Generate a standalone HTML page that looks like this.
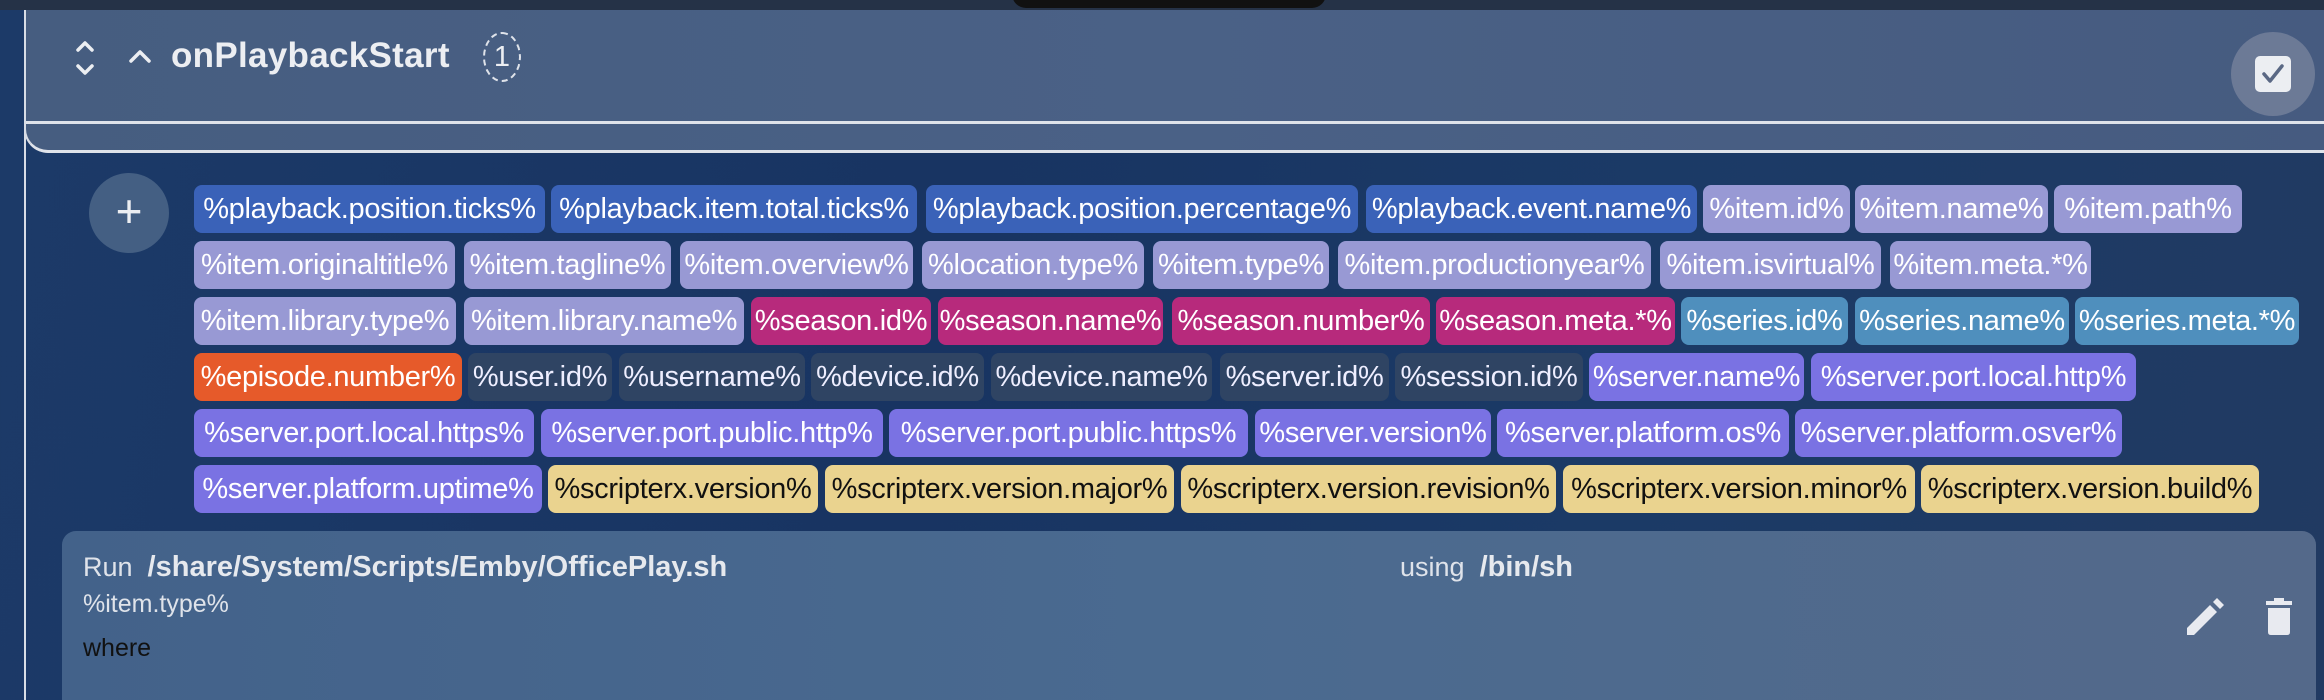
<!DOCTYPE html>
<html><head><meta charset="utf-8"><style>
*{margin:0;padding:0;box-sizing:border-box}
html,body{width:2324px;height:700px;overflow:hidden}
body{background:linear-gradient(100deg,#1c3a68 0%,#183462 40%,#1b3a66 70%,#213a62 100%);font-family:"Liberation Sans",sans-serif;position:relative}
.top{position:absolute;left:0;top:0;width:2324px;height:10px;background:#253247}
.pill{position:absolute;left:1012px;top:-20px;width:314px;height:28px;border-radius:14px;background:#111}
.vline{position:absolute;left:24px;top:10px;width:2px;height:690px;background:#d8dde6}
.head{position:absolute;left:24px;top:10px;width:2310px;height:143px;background:linear-gradient(90deg,#465d80,#4a6186 50%,#465b80);border-left:2px solid #d8dde6;border-bottom:3px solid #dfe3ea;border-bottom-left-radius:24px}
.hline{position:absolute;left:26px;top:121px;width:2300px;height:3px;background:#dfe3ea}
.title{position:absolute;left:171px;top:36px;font-size:35px;font-weight:bold;color:#eceef2;letter-spacing:0.3px}
.badge{position:absolute;left:483px;top:32px;width:38px;height:50px;border:2px dashed #dfe3ea;border-radius:50%;color:#eceef2;font-size:29px;text-align:center;line-height:46px}
.chk{position:absolute;left:2231px;top:32px;width:84px;height:84px;border-radius:50%;background:#6c7a96}
.chk div{position:absolute;left:24px;top:24px;width:36px;height:36px;border-radius:5px;background:#eceef2}
.plus{position:absolute;left:89px;top:173px;width:80px;height:80px;border-radius:50%;background:#445f83;color:#eceef2;font-size:46px;text-align:center;line-height:76px}
.c{position:absolute;height:48px;border-radius:8px;color:#fff;font-size:29px;line-height:48px;text-align:center;white-space:nowrap;overflow:hidden;letter-spacing:-0.3px}
.b{background:#3a62b8}.l{background:#9899d4}.m{background:#b72a7c}.t{background:#4f8fbd}.o{background:#e65a2a}.d{background:#2f4463;color:#eef}.p{background:#7a72e3}.y{background:#ead38f;color:#111}
.card{position:absolute;left:62px;top:531px;width:2254px;height:190px;border-radius:14px;background:linear-gradient(90deg,#43628a,#4a6a90 50%,#54698a)}
.txt{position:absolute;color:#dfe3ea;font-size:27px;white-space:nowrap}
</style></head><body>
<div class="top"></div><div class="pill"></div>
<div class="vline"></div>
<div class="head"></div>
<div class="hline"></div>
<svg style="position:absolute;left:72px;top:38px" width="26" height="40" viewBox="0 0 26 40"><path d="M6 12 L13 5 L20 12 M6 28 L13 35 L20 28" stroke="#eceef2" stroke-width="3.5" fill="none" stroke-linecap="round" stroke-linejoin="round"/></svg>
<svg style="position:absolute;left:126px;top:46px" width="28" height="20" viewBox="0 0 28 20"><path d="M5 15 L14 6 L23 15" stroke="#eceef2" stroke-width="3.5" fill="none" stroke-linecap="round" stroke-linejoin="round"/></svg>
<div class="title">onPlaybackStart</div>
<div class="badge">1</div>
<div class="chk"><div><svg width="36" height="36" viewBox="0 0 36 36"><path d="M9 18 L15 25 L27 10" stroke="#5a6884" stroke-width="3.5" fill="none" stroke-linecap="round" stroke-linejoin="round"/></svg></div></div>
<div class="plus">+</div>

<div class="c b" style="left:194px;top:185px;width:351px">%playback.position.ticks%</div>
<div class="c b" style="left:551px;top:185px;width:366px">%playback.item.total.ticks%</div>
<div class="c b" style="left:926px;top:185px;width:432px">%playback.position.percentage%</div>
<div class="c b" style="left:1366px;top:185px;width:331px">%playback.event.name%</div>
<div class="c l" style="left:1703px;top:185px;width:147px">%item.id%</div>
<div class="c l" style="left:1855px;top:185px;width:193px">%item.name%</div>
<div class="c l" style="left:2054px;top:185px;width:188px">%item.path%</div>

<div class="c l" style="left:194px;top:241px;width:261px">%item.originaltitle%</div>
<div class="c l" style="left:464px;top:241px;width:207px">%item.tagline%</div>
<div class="c l" style="left:680px;top:241px;width:233px">%item.overview%</div>
<div class="c l" style="left:922px;top:241px;width:222px">%location.type%</div>
<div class="c l" style="left:1153px;top:241px;width:176px">%item.type%</div>
<div class="c l" style="left:1338px;top:241px;width:313px">%item.productionyear%</div>
<div class="c l" style="left:1660px;top:241px;width:221px">%item.isvirtual%</div>
<div class="c l" style="left:1890px;top:241px;width:201px">%item.meta.*%</div>

<div class="c l" style="left:194px;top:297px;width:262px">%item.library.type%</div>
<div class="c l" style="left:464px;top:297px;width:280px">%item.library.name%</div>
<div class="c m" style="left:751px;top:297px;width:180px">%season.id%</div>
<div class="c m" style="left:938px;top:297px;width:225px">%season.name%</div>
<div class="c m" style="left:1172px;top:297px;width:258px">%season.number%</div>
<div class="c m" style="left:1436px;top:297px;width:239px">%season.meta.*%</div>
<div class="c t" style="left:1681px;top:297px;width:167px">%series.id%</div>
<div class="c t" style="left:1855px;top:297px;width:214px">%series.name%</div>
<div class="c t" style="left:2075px;top:297px;width:224px">%series.meta.*%</div>

<div class="c o" style="left:194px;top:353px;width:268px">%episode.number%</div>
<div class="c d" style="left:468px;top:353px;width:144px">%user.id%</div>
<div class="c d" style="left:619px;top:353px;width:186px">%username%</div>
<div class="c d" style="left:811px;top:353px;width:173px">%device.id%</div>
<div class="c d" style="left:991px;top:353px;width:221px">%device.name%</div>
<div class="c d" style="left:1220px;top:353px;width:169px">%server.id%</div>
<div class="c d" style="left:1395px;top:353px;width:188px">%session.id%</div>
<div class="c p" style="left:1589px;top:353px;width:215px">%server.name%</div>
<div class="c p" style="left:1811px;top:353px;width:325px">%server.port.local.http%</div>

<div class="c p" style="left:194px;top:409px;width:340px">%server.port.local.https%</div>
<div class="c p" style="left:541px;top:409px;width:342px">%server.port.public.http%</div>
<div class="c p" style="left:889px;top:409px;width:359px">%server.port.public.https%</div>
<div class="c p" style="left:1255px;top:409px;width:236px">%server.version%</div>
<div class="c p" style="left:1497px;top:409px;width:292px">%server.platform.os%</div>
<div class="c p" style="left:1795px;top:409px;width:327px">%server.platform.osver%</div>

<div class="c p" style="left:194px;top:465px;width:348px">%server.platform.uptime%</div>
<div class="c y" style="left:548px;top:465px;width:270px">%scripterx.version%</div>
<div class="c y" style="left:825px;top:465px;width:349px">%scripterx.version.major%</div>
<div class="c y" style="left:1181px;top:465px;width:375px">%scripterx.version.revision%</div>
<div class="c y" style="left:1563px;top:465px;width:352px">%scripterx.version.minor%</div>
<div class="c y" style="left:1921px;top:465px;width:338px">%scripterx.version.build%</div>

<div class="card"></div>
<div class="txt" style="left:83px;top:551px">Run&nbsp;&nbsp;<b style="color:#e6e9ee;font-size:29px">/share/System/Scripts/Emby/OfficePlay.sh</b></div>
<div class="txt" style="left:1400px;top:551px">using&nbsp;&nbsp;<b style="color:#e6e9ee;font-size:29px">/bin/sh</b></div>
<div class="txt" style="left:83px;top:590px;font-size:25px">%item.type%</div>
<div class="txt" style="left:83px;top:634px;font-size:25px;color:#111">where</div>
<svg style="position:absolute;left:2184px;top:598px" width="40" height="40" viewBox="0 0 40 40"><path d="M3 37 L3 30 L26 7 L33 14 L10 37 Z M29 4 L33 0 L40 7 L36 11 Z" fill="#e8eaf0"/></svg>
<svg style="position:absolute;left:2265px;top:598px" width="28" height="38" viewBox="0 0 28 38"><path d="M9 0 H19 V3 H27 V7 H1 V3 H9 Z M3 10 H25 V34 Q25 37 22 37 H6 Q3 37 3 34 Z" fill="#e8eaf0"/></svg>
</body></html>
